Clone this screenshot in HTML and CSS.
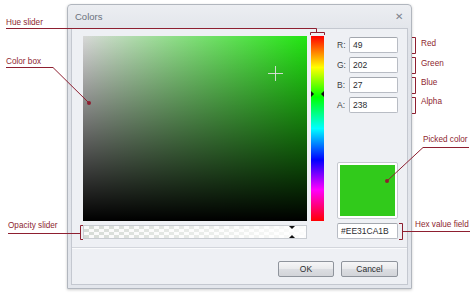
FILE: index.html
```html
<!DOCTYPE html>
<html lang="en">
<head>
  <meta charset="UTF-8">
  <title>Colors</title>
  <link rel="stylesheet" href="styles.css">
</head>
<body>
  <div class="stage">
    <div class="dialog">
      <div class="titlebar">
        <span class="title">Colors</span>
        <span class="close">&#x2715;</span>
      </div>
      <div class="panel">
        <div class="top-row">
          <div class="colorbox">
            <div class="cross"></div>
          </div>
          <div class="hue">
            <span class="arrow-r"></span>
            <span class="arrow-l"></span>
          </div>
          <div class="right-col">
            <div class="field"><span class="lbl">R:</span><div class="input">49</div></div>
            <div class="field"><span class="lbl">G:</span><div class="input">202</div></div>
            <div class="field"><span class="lbl">B:</span><div class="input">27</div></div>
            <div class="field"><span class="lbl">A:</span><div class="input">238</div></div>
            <div class="swatch"><div class="swatch-fill"></div></div>
          </div>
        </div>
        <div class="bottom-row">
          <div class="opacity">
            <span class="arrow-d"></span>
            <span class="arrow-u"></span>
          </div>
          <div class="input hex">#EE31CA1B</div>
        </div>
        <div class="separator"></div>
        <div class="footer">
          <button class="btn ok">OK</button>
          <button class="btn cancel">Cancel</button>
        </div>
      </div>
    </div>

    <!-- callouts -->
    <svg class="callouts" width="474" height="295" viewBox="0 0 474 295">
      <g fill="none" stroke="#8e1f30" stroke-width="1">
        <polyline points="6,28.5 316.5,28.5 316.5,33" />
        <path d="M310.5,35 V32.5 H324.5 V35" />
        <polyline points="6,67.5 53,67.5 89,103" />
        <polyline points="8,233.5 80.5,233.5" />
        <path d="M83,225.5 H80.5 V239.5 H83" />
        <path d="M412,37.5 H415.5 V53.5 H412" />
        <path d="M412,57.5 H415.5 V73.5 H412" />
        <path d="M412,77.5 H415.5 V93.5 H412" />
        <path d="M412,97.5 H415.5 V113.5 H412" />
        <polyline points="469,147.5 423,147.5 387,181" />
        <path d="M399,223.5 H402.5 V239.5 H399" />
        <polyline points="402.5,231.5 470,231.5" />
      </g>
      <circle cx="89" cy="103" r="2" fill="#8e1f30" />
      <circle cx="387" cy="181" r="2" fill="#8e1f30" />
    </svg>
    <span class="note n-hue">Hue slider</span>
    <span class="note n-box">Color box</span>
    <span class="note n-opacity">Opacity slider</span>
    <span class="note n-red">Red</span>
    <span class="note n-green">Green</span>
    <span class="note n-blue">Blue</span>
    <span class="note n-alpha">Alpha</span>
    <span class="note n-picked">Picked color</span>
    <span class="note n-hex">Hex value field</span>
  </div>
</body>
</html>
```

FILE: styles.css
```css
* {
  box-sizing: border-box;
}
body {
  margin: 0;
  background: #fff;
  font-family: 'Liberation Sans', Arial, sans-serif;
}
.stage {
  position: relative;
  width: 474px;
  height: 295px;
  overflow: hidden;
  padding-top: 4px;
}
.dialog {
  margin-left: 67px;
  width: 345px;
  height: 285px;
  display: flex;
  flex-direction: column;
  padding: 0 3px 3px;
  border: 1px solid #b1b6be;
  border-radius: 4px 4px 0 0;
  background: linear-gradient(#eceef2, #dfe2e8 12%, #e3e6ec);
  box-shadow: 0 1px 3px rgba(0,0,0,0.2);
}
.titlebar {
  height: 23px;
  display: flex;
  align-items: center;
  justify-content: space-between;
  padding: 0 4px 0 4px;
}
.title {
  font-size: 9.5px;
  color: #6b717c;
}
.close {
  font-size: 9.5px;
  color: #7d838d;
  margin-right: 1px;
}
.panel {
  flex: 1;
  border: 1px solid #c4c8d0;
  background: #eef0f4;
  padding: 7px 9px 0 11px;
  display: flex;
  flex-direction: column;
}
.top-row {
  display: flex;
}
.colorbox {
  position: relative;
  width: 224px;
  height: 185px;
  background:
    linear-gradient(to top, #000, rgba(0,0,0,0)),
    linear-gradient(to right, #d8d8d8, #22e612);
}
.cross {
  position: absolute;
  left: 185px;
  top: 30px;
  width: 15px;
  height: 15px;
  background:
    linear-gradient(rgba(225,232,225,0.9), rgba(225,232,225,0.9)) 7px 0 / 1px 15px no-repeat,
    linear-gradient(rgba(225,232,225,0.9), rgba(225,232,225,0.9)) 0 7px / 15px 1px no-repeat;
  filter: drop-shadow(0 0 0.6px rgba(60,80,60,0.8));
}
.hue {
  position: relative;
  width: 13px;
  height: 185px;
  margin-left: 4px;
  background: linear-gradient(#ff0000, #ffff00 17%, #00ff00 33%, #00ffff 50%, #0000ff 67%, #ff00ff 83%, #ff0000);
}
.arrow-r,
.arrow-l {
  position: absolute;
  top: 55px;
  width: 0;
  height: 0;
  border-top: 3px solid transparent;
  border-bottom: 3px solid transparent;
}
.arrow-r {
  left: 0;
  border-left: 3px solid #111;
}
.arrow-l {
  right: 0;
  border-right: 3px solid #111;
}
.right-col {
  width: 61px;
  margin-left: 13px;
  padding-top: 1px;
  display: flex;
  flex-direction: column;
  gap: 4px;
}
.field {
  display: flex;
  align-items: center;
  height: 16px;
}
.lbl {
  width: 12px;
  font-size: 8.5px;
  color: #3c3f44;
}
.input {
  height: 16px;
  width: 49px;
  background: #fff;
  border: 1px solid #b8bcc4;
  border-top-color: #a3a7ae;
  border-radius: 2px;
  font-size: 8.5px;
  line-height: 14px;
  padding-left: 3px;
  color: #2a2c30;
}
.swatch {
  margin-top: 45px;
  width: 61px;
  height: 57px;
  padding: 2px;
  background: #fff;
  border: 1px solid #c6c9d0;
  border-radius: 2px;
}
.swatch-fill {
  width: 100%;
  height: 100%;
  background: #31ca1b;
}
.bottom-row {
  display: flex;
  margin-top: 2px;
}
.opacity {
  position: relative;
  width: 224px;
  height: 14px;
  margin-top: 2px;
  border: 1px solid #c8ccd2;
  background:
    linear-gradient(to right, rgba(255,255,255,0), rgba(255,255,255,0.9)),
    conic-gradient(#d6dbd6 25%, #fafafa 0 50%, #d6dbd6 0 75%, #fafafa 0) 0 0 / 10px 6px;
}
.arrow-d,
.arrow-u {
  position: absolute;
  left: 205px;
  width: 0;
  height: 0;
  border-left: 3px solid transparent;
  border-right: 3px solid transparent;
}
.arrow-d {
  top: 0;
  border-top: 3px solid #111;
}
.arrow-u {
  bottom: 0;
  border-bottom: 3px solid #111;
}
.hex {
  width: 61px;
  margin-left: 30px;
}
.separator {
  margin-top: 8px;
  margin-left: -11px;
  margin-right: -9px;
  height: 2px;
  border-top: 1px solid #d3d6dc;
  border-bottom: 1px solid #fafbfc;
}
.footer {
  display: flex;
  justify-content: flex-end;
  gap: 7px;
  padding-top: 12px;
}
.btn {
  height: 16px;
  padding: 0;
  font-family: inherit;
  font-size: 8.5px;
  color: #2a2c30;
  border: 1px solid #8f949c;
  border-radius: 2px;
  background: linear-gradient(#f6f6f7, #e9eaec 50%, #dcdee2 51%, #d2d4d9);
}
.ok {
  width: 56px;
}
.cancel {
  width: 57px;
}
.callouts {
  position: absolute;
  left: 0;
  top: 0;
  pointer-events: none;
}
.note {
  position: absolute;
  font-size: 8.2px;
  line-height: 10px;
  color: #8e1f30;
  white-space: nowrap;
}
.n-hue { left: 6px; top: 18px; }
.n-box { left: 6px; top: 57px; }
.n-opacity { left: 8px; top: 221px; }
.n-red { left: 421px; top: 39px; }
.n-green { left: 421px; top: 59px; }
.n-blue { left: 421px; top: 78px; }
.n-alpha { left: 421px; top: 97px; }
.n-picked { left: 423px; top: 135px; }
.n-hex { left: 415px; top: 220px; }
```
